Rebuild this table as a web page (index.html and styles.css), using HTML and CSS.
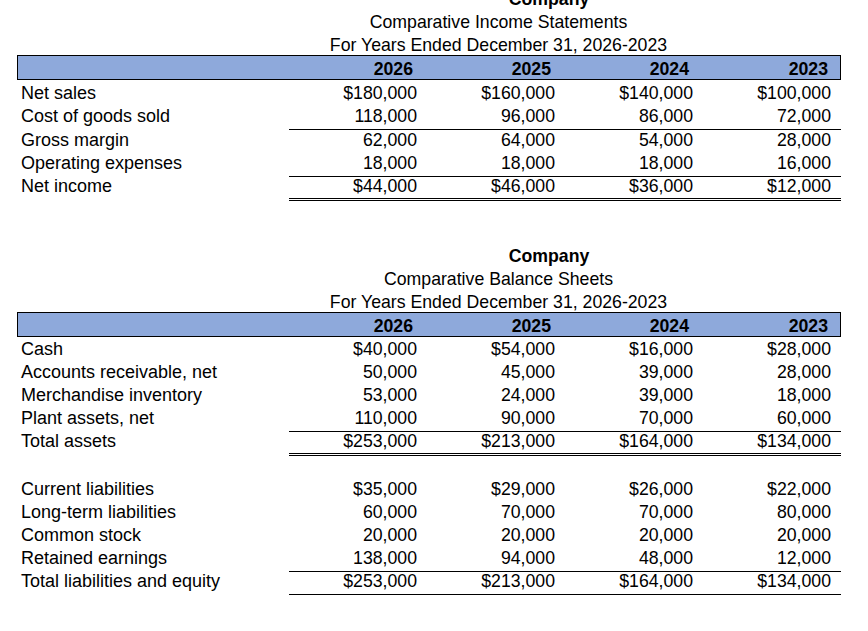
FILE: index.html
```html
<!DOCTYPE html>
<html>
<head>
<meta charset="utf-8">
<link rel="stylesheet" href="styles.css">
</head>
<body>
<div class="page">
  <section class="statement first">
    <div class="titles">
      <div class="title company">Company</div>
      <div class="title">Comparative Income Statements</div>
      <div class="title last">For Years Ended December 31, 2026-2023</div>
    </div>
    <div class="row head"><div class="lbl"></div><div class="yr">2026</div><div class="yr">2025</div><div class="yr">2024</div><div class="yr last">2023</div></div>
    <div class="row tall"><div class="lbl">Net sales</div><div class="num">$180,000</div><div class="num">$160,000</div><div class="num">$140,000</div><div class="num">$100,000</div></div>
    <div class="row under"><div class="lbl">Cost of goods sold</div><div class="num">118,000</div><div class="num">96,000</div><div class="num">86,000</div><div class="num">72,000</div></div>
    <div class="row tall"><div class="lbl">Gross margin</div><div class="num">62,000</div><div class="num">64,000</div><div class="num">54,000</div><div class="num">28,000</div></div>
    <div class="row under"><div class="lbl">Operating expenses</div><div class="num">18,000</div><div class="num">18,000</div><div class="num">18,000</div><div class="num">16,000</div></div>
    <div class="row total"><div class="lbl">Net income</div><div class="num">$44,000</div><div class="num">$46,000</div><div class="num">$36,000</div><div class="num">$12,000</div></div>
  </section>

  <section class="statement second">
    <div class="titles">
      <div class="title company bold">Company</div>
      <div class="title">Comparative Balance Sheets</div>
      <div class="title last">For Years Ended December 31, 2026-2023</div>
    </div>
    <div class="row head"><div class="lbl"></div><div class="yr">2026</div><div class="yr">2025</div><div class="yr">2024</div><div class="yr last">2023</div></div>
    <div class="row"><div class="lbl">Cash</div><div class="num">$40,000</div><div class="num">$54,000</div><div class="num">$16,000</div><div class="num">$28,000</div></div>
    <div class="row"><div class="lbl">Accounts receivable, net</div><div class="num">50,000</div><div class="num">45,000</div><div class="num">39,000</div><div class="num">28,000</div></div>
    <div class="row"><div class="lbl">Merchandise inventory</div><div class="num">53,000</div><div class="num">24,000</div><div class="num">39,000</div><div class="num">18,000</div></div>
    <div class="row under"><div class="lbl">Plant assets, net</div><div class="num">110,000</div><div class="num">90,000</div><div class="num">70,000</div><div class="num">60,000</div></div>
    <div class="row total"><div class="lbl">Total assets</div><div class="num">$253,000</div><div class="num">$213,000</div><div class="num">$164,000</div><div class="num">$134,000</div></div>
    <div class="row blank"></div>
    <div class="row"><div class="lbl">Current liabilities</div><div class="num">$35,000</div><div class="num">$29,000</div><div class="num">$26,000</div><div class="num">$22,000</div></div>
    <div class="row"><div class="lbl">Long-term liabilities</div><div class="num">60,000</div><div class="num">70,000</div><div class="num">70,000</div><div class="num">80,000</div></div>
    <div class="row"><div class="lbl">Common stock</div><div class="num">20,000</div><div class="num">20,000</div><div class="num">20,000</div><div class="num">20,000</div></div>
    <div class="row under"><div class="lbl">Retained earnings</div><div class="num">138,000</div><div class="num">94,000</div><div class="num">48,000</div><div class="num">12,000</div></div>
    <div class="row total wide"><div class="lbl">Total liabilities and equity</div><div class="num">$253,000</div><div class="num">$213,000</div><div class="num">$164,000</div><div class="num">$134,000</div></div>
  </section>
</div>
</body>
</html>
```

FILE: styles.css
```css
html, body {
  margin: 0;
  padding: 0;
  background: #ffffff;
}
body {
  font-family: "Liberation Sans", Arial, sans-serif;
  font-size: 17.7px;
  color: #000000;
  overflow: hidden;
}
.page {
  padding-left: 17px;
  width: 824px;
}
.statement.first {
  margin-top: -13px;
}
.statement.second {
  margin-top: 45px;
}
.titles {
  margin-left: 139px;
  text-align: center;
}
.title {
  height: 23px;
  line-height: 25px;
  white-space: nowrap;
}
.title.last {
  height: 22px;
}
.title.company {
  font-weight: bold;
  padding-left: 101px;
}
.row {
  display: grid;
  grid-template-columns: 272px repeat(4, 138px);
  height: 23px;
  line-height: 25px;
  box-sizing: border-box;
}
.row.tall {
  height: 24px;
  line-height: 27px;
}
.row.blank {
  height: 23px;
}
.row.head {
  height: 25px;
  line-height: 27px;
  background: #8ea9db;
  border: 1px solid #000000;
  font-weight: bold;
}
.lbl {
  padding-left: 4px;
  white-space: nowrap;
  font-size: 18px;
}
.yr {
  text-align: right;
  padding-right: 15px;
}
.yr.last {
  padding-right: 14px;
}
.num {
  text-align: right;
  padding-right: 10px;
  white-space: nowrap;
}
.row.under .num {
  border-bottom: 1px solid #000000;
}
.row.total {
  height: 25px;
  line-height: 24px;
}
.row.total.wide {
  height: 26px;
  line-height: 25px;
}
.row.total .num {
  border-bottom: 3px double #000000;
}
```
